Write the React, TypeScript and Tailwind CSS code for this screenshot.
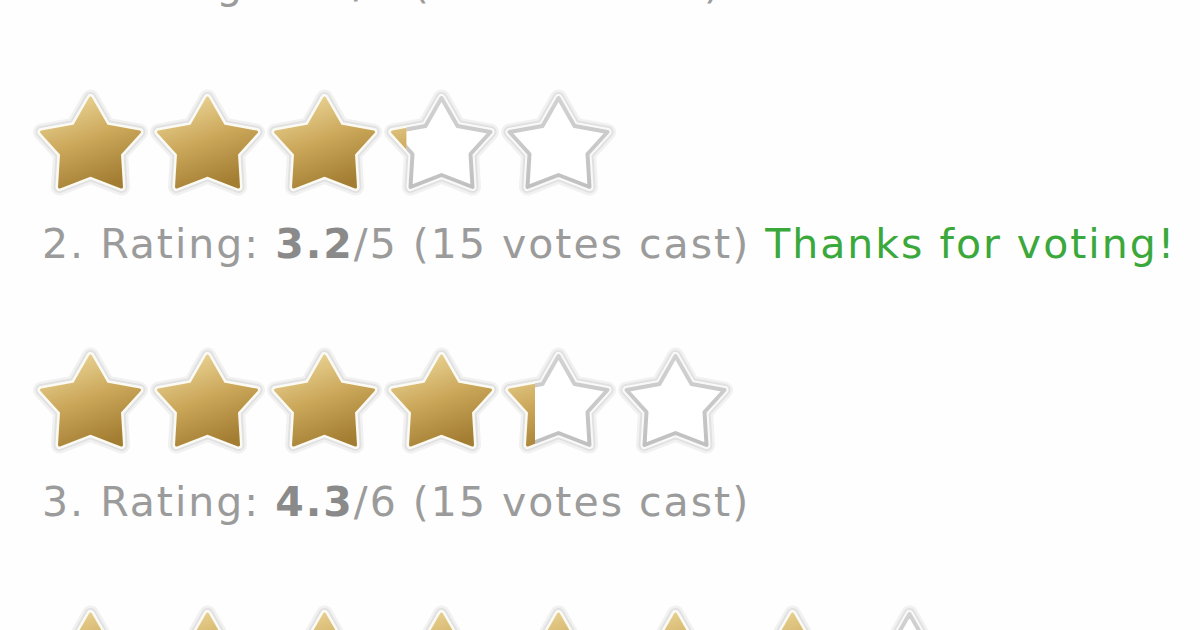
import { FC, useId } from "react";

// star outline, relative to the centre of a 117 x 112 cell
const OUTER = [
  [0, -46],
  [16, -18],
  [49, -12],
  [29, 10],
  [31, 43],
  [0, 31],
  [-31, 43],
  [-29, 10],
  [-49, -12],
  [-16, -18],
];

const CX = 58.5;
const CY = 59;
const CELL = 117;

const points = OUTER.map(([x, y]) => `${CX + x},${CY + y}`).join(" ");

const Star: FC<{ fill: number }> = ({ fill }) => {
  const id = useId().replace(/:/g, "");
  const width = Math.max(0, Math.min(1, fill)) * CELL;

  return (
    <svg width={CELL} height={112} viewBox="0 0 117 112" className="block shrink-0">
      <defs>
        <linearGradient id={`g${id}`} x1="0.2" y1="0" x2="0.6" y2="1">
          <stop offset="0" stopColor="#ecd799" />
          <stop offset="0.5" stopColor="#cba75a" />
          <stop offset="1" stopColor="#a27d32" />
        </linearGradient>
        <linearGradient id={`e${id}`} x1="0" y1="0" x2="0" y2="1">
          <stop offset="0" stopColor="#d2d2d2" />
          <stop offset="1" stopColor="#c0c0c0" />
        </linearGradient>
        <clipPath id={`c${id}`}>
          <rect x="0" y="0" width={width} height="112" />
        </clipPath>
      </defs>

      {/* glow */}
      <polygon points={points} fill="none" stroke="#f1f1f1" strokeWidth="17" strokeLinejoin="round" />
      <polygon points={points} fill="none" stroke="#e1e1e1" strokeWidth="12" strokeLinejoin="round" />
      <polygon points={points} fill="none" stroke="#f9f9f9" strokeWidth="8" strokeLinejoin="round" />

      {/* empty star */}
      <polygon
        points={points}
        fill="#ffffff"
        stroke={`url(#e${id})`}
        strokeWidth="4"
        strokeLinejoin="round"
      />

      {/* gold part */}
      {width > 0 && (
        <g clipPath={`url(#c${id})`}>
          <polygon points={points} fill="#fbfaf3" stroke="#fbfaf3" strokeWidth="7" strokeLinejoin="round" />
          <polygon
            points={points}
            fill={`url(#g${id})`}
            stroke={`url(#g${id})`}
            strokeWidth="3"
            strokeLinejoin="round"
          />
        </g>
      )}
    </svg>
  );
};

const Stars: FC<{ rating: number; max: number }> = ({ rating, max }) => (
  <div className="flex">
    {Array.from({ length: max }, (_, i) => (
      <Star key={i} fill={rating - i} />
    ))}
  </div>
);

interface Row {
  index: number;
  rating: number;
  max: number;
  votes: number;
  thanks?: boolean;
}

const Caption: FC<{ row: Row }> = ({ row }) => (
  <p className="ml-[10px] whitespace-nowrap text-[41px] leading-[48px] tracking-[2px] text-[#9b9b9b]">
    {row.index}. Rating: <b className="font-bold text-[#8a8a8a]">{row.rating.toFixed(1)}</b>/{row.max} (
    {row.votes} votes cast)
    {row.thanks && <span className="text-[#3aa83a]"> Thanks for voting!</span>}
  </p>
);

const rows: Row[] = [
  { index: 2, rating: 3.2, max: 5, votes: 15, thanks: true },
  { index: 3, rating: 4.3, max: 6, votes: 15 },
  { index: 4, rating: 7, max: 8, votes: 15 },
];

export default function App() {
  return (
    <div
      className="h-[630px] w-[1200px] overflow-hidden bg-[#fdfefd] pl-[32px]"
      style={{ fontFamily: '"DejaVu Sans", Verdana, sans-serif' }}
    >
      <div className="-mt-[40px]">
        <Caption row={{ index: 1, rating: 2.9, max: 5, votes: 9 }} />
      </div>

      {rows.map((row, i) => (
        <div key={row.index}>
          <div className={i === 0 ? "mt-[77px]" : "mt-[75px]"}>
            <Stars rating={row.rating} max={row.max} />
          </div>
          <div className="mt-[23px]">
            <Caption row={row} />
          </div>
        </div>
      ))}
    </div>
  );
}
